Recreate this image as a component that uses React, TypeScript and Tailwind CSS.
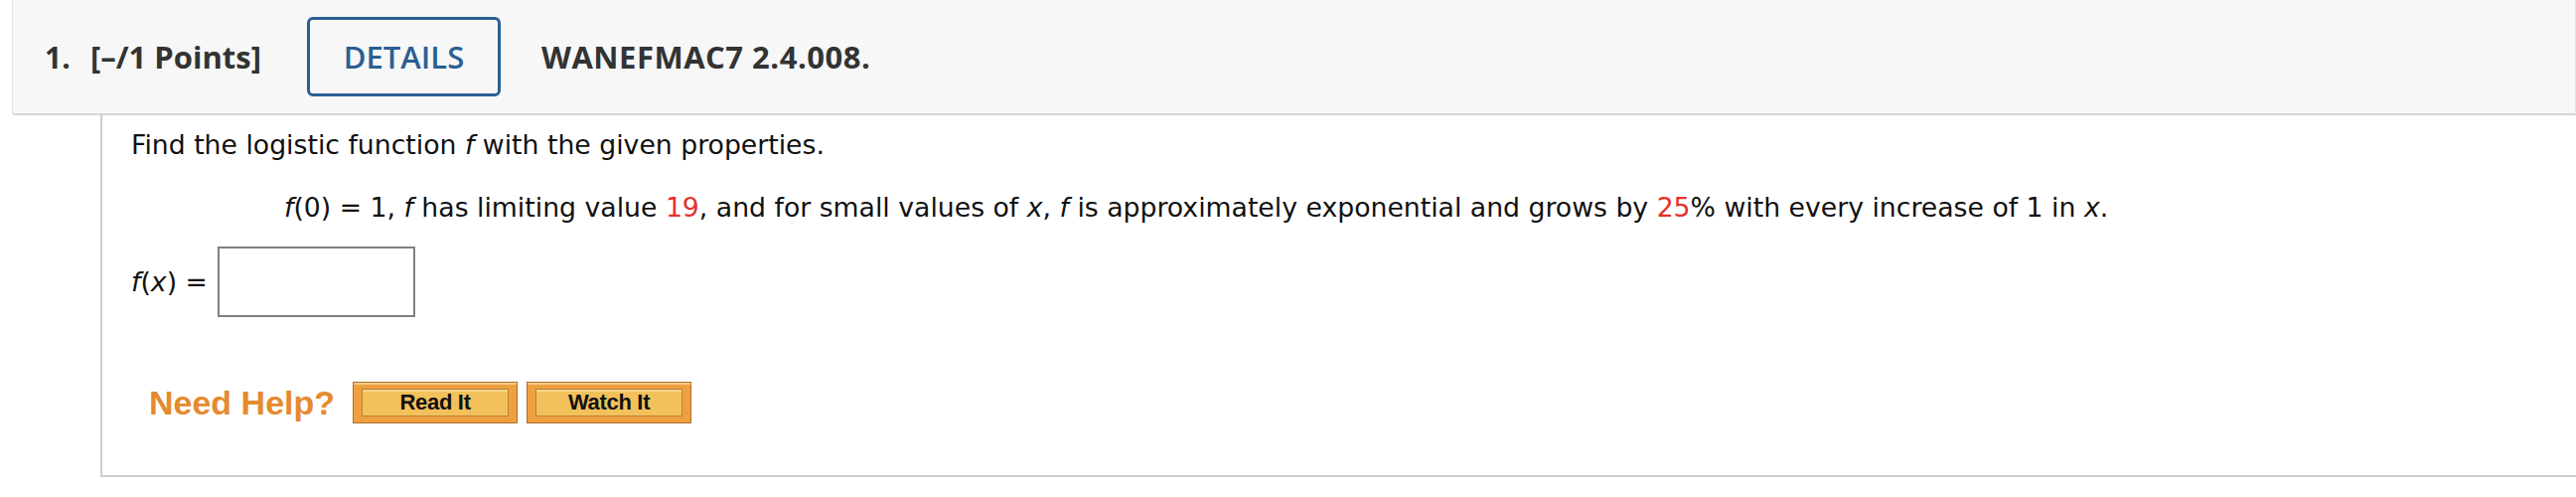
import React from "react";

const HelpButton: React.FC<{ label: string }> = ({ label }) => {
  return (
    <button className="w-[166px] h-[42px] border border-[#a8702f] bg-[#eea03f] px-[8px] py-[6px] shadow-[inset_0_2px_0_#f7c98a]">
      <span className="flex h-full w-full items-center justify-center border border-[#b98236] bg-[#f3c15b] shadow-[inset_0_2px_0_#f8d68a] font-['Liberation_Sans',Arial,sans-serif] text-[22px] font-bold text-[#111] tracking-[-0.3px]">
        {label}
      </span>
    </button>
  );
};

const App: React.FC = () => {
  return (
    <div className="w-full h-[500px] bg-white overflow-hidden">
      {/* question header */}
      <div className="ml-[12px] h-[116px] flex items-center bg-[#f7f7f7] border border-t-0 border-[#e2e2e2] border-b-2 border-b-[#d6d6d6] rounded-bl-[3px] font-['Open_Sans',sans-serif] text-[#333]">
        <span className="ml-[32px] w-[46px] text-[30px] font-bold">1.</span>
        <span className="w-[218px] text-[31px] font-bold">[–/1 Points]</span>
        <button className="w-[195px] h-[80px] rounded-[6px] border-[3px] border-[#2b5f94] bg-[#f7f7f7] text-[31px] text-[#2b5f94] font-semibold">
          DETAILS
        </button>
        <span className="ml-[41px] text-[31px] font-bold tracking-[0.5px]">
          WANEFMAC7 2.4.008.
        </span>
      </div>

      {/* question body */}
      <div className="ml-[101px] h-[364px] border-l-2 border-b-2 border-[#cccccc] pl-[29px] pt-[14px] font-['DejaVu_Sans',Verdana,sans-serif] text-[26.7px] leading-[32px] text-[#111]">
        <p>
          Find the logistic function <i>f</i> with the given properties.
        </p>
        <p className="mt-[31px] pl-[154px]">
          <i>f</i>(0) = 1, <i>f</i> has limiting value{" "}
          <span className="text-[#e8302a]">19</span>, and for small values of{" "}
          <i>x</i>, <i>f</i> is approximately exponential and grows by{" "}
          <span className="text-[#e8302a]">25</span>% with every increase of 1
          in <i>x</i>.
        </p>
        <div className="mt-[23px] flex items-center">
          <span className="w-[87px]">
            <i>f</i>(<i>x</i>) =
          </span>
          <input
            type="text"
            className="w-[199px] h-[71px] border-2 border-[#808080] bg-white outline-none"
          />
        </div>
        <div className="mt-[65px] ml-[18px] flex items-center">
          <span className="font-['Liberation_Sans',Arial,sans-serif] text-[34px] font-bold text-[#e58a2e]">
            Need Help?
          </span>
          <div className="ml-[18px] flex gap-[9px]">
            <HelpButton label="Read It" />
            <HelpButton label="Watch It" />
          </div>
        </div>
      </div>
    </div>
  );
};

export default App;
